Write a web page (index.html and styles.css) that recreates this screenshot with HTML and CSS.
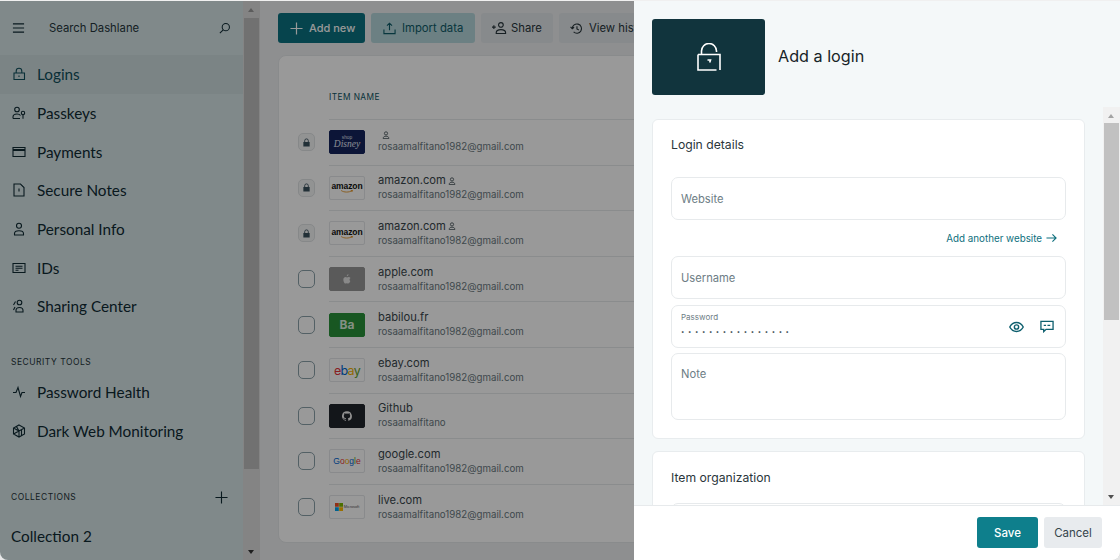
FILE: index.html
```html
<!DOCTYPE html>
<html lang="en">
<head>
<meta charset="utf-8">
<title>Dashlane - Add a login</title>
<link rel="stylesheet" href="styles.css">
</head>
<body>
<div class="app">
  <aside class="sidebar">
    <div class="search">
      <svg class="ico-menu" viewBox="0 0 14 12"><path d="M1 1.5h12M1 6h12M1 10.5h12"/></svg>
      <span class="search-text">Search Dashlane</span>
      <svg class="ico-search" viewBox="0 0 14 14"><circle cx="8.4" cy="5.6" r="3.9"/><path d="M5.6 8.4L2 12"/></svg>
    </div>
    <nav class="nav">
      <a class="nav-item active"><svg viewBox="0 0 14 14"><path d="M2 6h10.500v6.500H2zM4.200 6V4a2.800 2.800 0 0 1 5.600 0v2M7 8.500v1.500"/></svg><span>Logins</span></a>
      <a class="nav-item"><svg viewBox="0 0 14 14"><circle cx="5" cy="3.500" r="2.300"/><path d="M1 12.500v-1.500c0-2 1.600-3 4-3s3 .7 3.500 1.500M1 12.500h7"/><circle cx="11" cy="7" r="1.700"/><path d="M11 8.700v4"/></svg><span>Passkeys</span></a>
      <a class="nav-item"><svg viewBox="0 0 14 14"><path d="M1 2.500h12v9H1zM1 4.500h12M1 5.500h12"/></svg><span>Payments</span></a>
      <a class="nav-item"><svg viewBox="0 0 14 14"><path d="M2 1h6.500L12 4.500V13H2zM7 5.500v3"/></svg><span>Secure Notes</span></a>
      <a class="nav-item"><svg viewBox="0 0 14 14"><circle cx="7" cy="3.700" r="2.500"/><path d="M2.500 13v-1.500c0-1.700 1.500-2.800 4.500-2.800s4.500 1.100 4.500 2.800V13z"/></svg><span>Personal Info</span></a>
      <a class="nav-item"><svg viewBox="0 0 14 14"><path d="M1 2.500h12v9H1zM3.500 5.200h7M3.500 7.200h7M3.500 9.200h3"/></svg><span>IDs</span></a>
      <a class="nav-item"><svg viewBox="0 0 14 14"><circle cx="7.500" cy="3.500" r="2.300"/><path d="M4 13v-1.500C4 9.700 5.500 8.500 7.500 8.500s3.500 1.200 3.500 3V13zM3.500 2.500L1.500 6M3 8L1.500 11"/></svg><span>Sharing Center</span></a>
    </nav>
    <h2 class="side-label tools-label">SECURITY TOOLS</h2>
    <nav class="nav">
      <a class="nav-item"><svg viewBox="0 0 14 14"><path d="M1 7.500h3l2-5 2.500 9 1.500-4h3"/></svg><span>Password Health</span></a>
      <a class="nav-item"><svg viewBox="0 0 14 14"><path d="M7 1l5.500 3v6L7 13l-5.500-3V4zM4.500 2.500L7 7l5.500-3M7 7l-5.500 3M7 7v6M9.500 11.500V5.500M1.500 4l5.500 3"/></svg><span>Dark Web Monitoring</span></a>
    </nav>
    <div class="coll-head">
      <h2 class="side-label">COLLECTIONS</h2>
      <svg class="ico-plus" viewBox="0 0 14 14"><path d="M7 .5v13M.5 7h13"/></svg>
    </div>
    <div class="coll-item">Collection 2</div>
  </aside>
  <div class="side-scroll">
    <span class="arrow up"></span>
    <span class="side-thumb"></span>
    <span class="arrow down"></span>
  </div>

  <main class="main">
    <div class="toolbar">
      <button class="btn btn-add"><svg viewBox="0 0 14 14"><path d="M7 .5v13M.5 7h13"/></svg>Add new</button>
      <button class="btn btn-import"><svg viewBox="0 0 14 14"><path d="M1 8v4.500h12V8M7 9V1.500M4.300 4L7 1.300 9.700 4"/></svg>Import data</button>
      <button class="btn btn-plain"><svg viewBox="0 0 16 14"><circle cx="9.500" cy="3.700" r="2.500"/><path d="M4.500 12.800v-.8c0-2 2-3.300 5-3.300s5 1.300 5 3.300v.8zM0 6h4M2 4v4"/></svg>Share</button>
      <button class="btn btn-plain"><svg class="ico-hist" viewBox="0 0 14 14"><path d="M2.400 7a5 5 0 1 1 1.500 3.700M.6 5.300L2.400 7.300l2-1.600M7.500 4.500V7.500l2 1"/></svg>View history</button>
    </div>
    <section class="card-list">
      <div class="list-head">ITEM NAME</div>
      <ul class="rows">
        <li class="row"><span class="lockbox"><svg viewBox="0 0 10 10"><path class="lock-shackle" d="M3 5V3a2 2 0 0 1 4 0v2"/><path class="lock-body" d="M1.500 4.500h7v5h-7z"/></svg></span><span class="logo logo-disney"><small>shop</small><em>Disney</em></span><div class="row-text"><div class="row-title"><svg class="shared" viewBox="0 0 10 10"><circle cx="5" cy="3" r="2"/><path d="M1.500 9.500c0-2 1-3 3.500-3s3.500 1 3.500 3z"/></svg></div><div class="row-sub">rosaamalfitano1982@gmail.com</div></div></li>
        <li class="row"><span class="lockbox"><svg viewBox="0 0 10 10"><path class="lock-shackle" d="M3 5V3a2 2 0 0 1 4 0v2"/><path class="lock-body" d="M1.500 4.500h7v5h-7z"/></svg></span><span class="logo logo-amazon">amazon<svg viewBox="0 0 24 5"><path d="M2 .8c5 3.500 13 3.500 19 .2M18.500.6l3 .2-1.200 2.400"/></svg></span><div class="row-text"><div class="row-title">amazon.com<svg class="shared" viewBox="0 0 10 10"><circle cx="5" cy="3" r="2"/><path d="M1.500 9.500c0-2 1-3 3.500-3s3.500 1 3.500 3z"/></svg></div><div class="row-sub">rosaamalfitano1982@gmail.com</div></div></li>
        <li class="row"><span class="lockbox"><svg viewBox="0 0 10 10"><path class="lock-shackle" d="M3 5V3a2 2 0 0 1 4 0v2"/><path class="lock-body" d="M1.500 4.500h7v5h-7z"/></svg></span><span class="logo logo-amazon">amazon<svg viewBox="0 0 24 5"><path d="M2 .8c5 3.500 13 3.500 19 .2M18.500.6l3 .2-1.200 2.400"/></svg></span><div class="row-text"><div class="row-title">amazon.com<svg class="shared" viewBox="0 0 10 10"><circle cx="5" cy="3" r="2"/><path d="M1.500 9.500c0-2 1-3 3.500-3s3.500 1 3.500 3z"/></svg></div><div class="row-sub">rosaamalfitano1982@gmail.com</div></div></li>
        <li class="row"><span class="check"></span><span class="logo logo-apple"><svg viewBox="0 0 12 14"><path d="M8.300 0c.1 1.500-1.200 2.900-2.600 2.800C5.600 1.400 6.900.1 8.300 0zM11 10c-.7 1.900-1.900 3.800-3.200 3.800-.9 0-1.200-.6-2.200-.6s-1.400.6-2.200.6C2 13.800.5 10.700.5 8.200.5 5.500 2.200 4 3.800 4c1 0 1.800.7 2.300.7S7.400 4 8.600 4c.9 0 2 .5 2.700 1.500-2.100 1.300-1.800 3.800-.3 4.500z"/></svg></span><div class="row-text"><div class="row-title">apple.com</div><div class="row-sub">rosaamalfitano1982@gmail.com</div></div></li>
        <li class="row"><span class="check"></span><span class="logo logo-ba">Ba</span><div class="row-text"><div class="row-title">babilou.fr</div><div class="row-sub">rosaamalfitano1982@gmail.com</div></div></li>
        <li class="row"><span class="check"></span><span class="logo logo-ebay"><b class="c-red">e</b><b class="c-blue">b</b><b class="c-yel">a</b><b class="c-grn">y</b></span><div class="row-text"><div class="row-title">ebay.com</div><div class="row-sub">rosaamalfitano1982@gmail.com</div></div></li>
        <li class="row"><span class="check"></span><span class="logo logo-github"><svg viewBox="0 0 16 16"><path d="M8 .2a8 8 0 0 0-2.500 15.600c.4.100.5-.200.500-.400v-1.400c-2.200.500-2.700-1-2.700-1-.400-.900-.900-1.200-.900-1.200-.700-.500.100-.500.100-.500.800.100 1.200.800 1.200.800.700 1.200 1.900.900 2.300.700.100-.500.300-.900.500-1.100-1.800-.200-3.600-.900-3.600-4 0-.900.300-1.600.800-2.100-.100-.200-.400-1 .100-2.100 0 0 .700-.200 2.200.800a7.500 7.500 0 0 1 4 0c1.500-1 2.200-.800 2.200-.800.400 1.100.200 1.900.100 2.100.500.600.800 1.300.800 2.100 0 3.100-1.900 3.700-3.700 3.900.300.300.600.700.600 1.500v2.200c0 .200.100.500.600.400A8 8 0 0 0 8 .2z"/></svg></span><div class="row-text"><div class="row-title">Github</div><div class="row-sub">rosaamalfitano</div></div></li>
        <li class="row"><span class="check"></span><span class="logo logo-google"><b class="c-blue">G</b><b class="c-red">o</b><b class="c-yel">o</b><b class="c-blue">g</b><b class="c-grn">l</b><b class="c-red">e</b></span><div class="row-text"><div class="row-title">google.com</div><div class="row-sub">rosaamalfitano1982@gmail.com</div></div></li>
        <li class="row"><span class="check"></span><span class="logo logo-ms"><svg viewBox="0 0 8 8"><path class="ms-r" d="M0 0h3.800v3.800H0z"/><path class="ms-g" d="M4.200 0H8v3.800H4.200z"/><path class="ms-b" d="M0 4.200h3.800V8H0z"/><path class="ms-y" d="M4.200 4.200H8V8H4.200z"/></svg>Microsoft</span><div class="row-text"><div class="row-title">live.com</div><div class="row-sub">rosaamalfitano1982@gmail.com</div></div></li>
      </ul>
    </section>
  </main>

  <div class="dim"></div>

  <aside class="panel">
    <header class="panel-head">
      <div class="tile"><svg viewBox="0 0 24 28"><path d="M1 11.500h22v15.500M19.500 27H1V11.500M4.500 11.500V8a7.500 7.500 0 0 1 15 0v1M10.500 17h3l-.8 2.500"/></svg></div>
      <h1>Add a login</h1>
    </header>
    <div class="panel-body">
      <div class="panel-content">
        <section class="form-card">
          <h2>Login details</h2>
          <div class="field">Website</div>
          <a class="add-site">Add another website<svg viewBox="0 0 12 10"><path d="M.5 5h10.500M7 1l4 4-4 4"/></svg></a>
          <div class="field">Username</div>
          <div class="field field-pass">
            <div class="pass-text"><label>Password</label><span class="dots">••••••••••••••••</span></div>
            <svg class="ico-eye" viewBox="0 0 16 12"><path d="M.8 6C2.500 2.800 5 1.200 8 1.200S13.500 2.800 15.200 6c-1.700 3.200-4.200 4.800-7.200 4.800S2.500 9.200.8 6z"/><circle cx="8" cy="6" r="2.300"/></svg>
            <svg class="ico-gen" viewBox="0 0 15 13"><path d="M1 1h13v8.500H6.500L4 12V9.500H1zM4 5.300h2.500M8 5.300h3"/></svg>
          </div>
          <div class="field field-note">Note</div>
        </section>
        <section class="form-card second">
          <h2>Item organization</h2>
          <div class="field"></div>
        </section>
      </div>
      <div class="panel-scroll">
        <span class="arrow up light"></span>
        <span class="panel-thumb"></span>
        <span class="arrow down dark"></span>
      </div>
    </div>
    <footer class="panel-foot">
      <button class="btn-save">Save</button>
      <button class="btn-cancel">Cancel</button>
    </footer>
  </aside>
</div>
</body>
</html>
```

FILE: styles.css
```css
* { box-sizing: border-box; }
html, body { margin: 0; padding: 0; height: 100%; overflow: hidden; }
body { background: #e8e8e8; font-family: "Inter", "Liberation Sans", sans-serif; color: #1c2a30; }
ul { list-style: none; margin: 0; padding: 0; }
h1, h2 { margin: 0; font-weight: 400; }
button { font-family: inherit; border: 0; padding: 0; }
svg { fill: none; stroke: currentColor; display: block; }

.app { position: relative; display: flex; width: 1120px; height: 560px; overflow: hidden; border-radius: 0 0 8px 8px; background: #edeef0; border-top: 1px solid #f0f0f0; }

/* Sidebar */
.sidebar { width: 243px; flex: none; height: 559px; background: #d6e5e7; color: #0f2a33; font-family: "Lato", "Inter", sans-serif; display: flex; flex-direction: column; overflow: hidden; }
.search { height: 54px; flex: none; display: flex; align-items: center; padding: 0 12px; }
.ico-menu { width: 13px; height: 12px; stroke-width: 1.2; }
.search-text { margin-left: 24px; font-family: "Inter", sans-serif; font-size: 11.3px; color: #25353b; flex: 1; }
.ico-search { width: 13px; height: 13px; stroke-width: 1.1; }
.nav { display: flex; flex-direction: column; }
.nav-item { height: 38.7px; display: flex; align-items: center; padding-left: 12px; font-size: 15.3px; }
.nav-item svg { width: 14px; height: 14px; stroke-width: 1.1; margin-right: 11px; flex: none; }
.nav-item.active { background: #cedcde; color: #0f4f5c; }
.side-label { font-size: 8.5px; letter-spacing: .5px; padding-left: 11px; color: #243238; font-family: "Inter", sans-serif; }
.tools-label { margin-top: 29px; margin-bottom: 4px; line-height: 14px; }
.coll-head { display: flex; justify-content: space-between; align-items: center; margin-top: 40px; padding-right: 15px; height: 14px; }
.ico-plus { width: 13px; height: 13px; stroke-width: 1.2; }
.coll-item { margin-top: 22px; padding-left: 11px; font-size: 15.3px; line-height: 20px; }

.side-scroll { width: 17px; flex: none; height: 559px; background: #dcdcdc; display: flex; flex-direction: column; align-items: center; position: relative; padding-top: 17px; }
.side-thumb { width: 15px; height: 451px; background: #bcbcbc; }
.arrow { position: absolute; left: 5px; width: 0; height: 0; border-left: 3.5px solid transparent; border-right: 3.5px solid transparent; }
.arrow.up { top: 7px; border-bottom: 4px solid #9a9a9a; }
.arrow.down { bottom: 6px; border-top: 4px solid #333; }
.arrow.up.light { border-bottom-color: #a3a3a3; }
.arrow.down.dark { border-top-color: #505050; }

/* Main list */
.main { flex: 1; padding: 12px 0 0 18px; min-width: 0; overflow: hidden; }
.toolbar { display: flex; gap: 6px; white-space: nowrap; }
.btn { height: 30px; border-radius: 3px; display: flex; align-items: center; font-size: 11.3px; flex: none; }
.btn svg { flex: none; }
.btn-add { width: 87px; background: #0b7280; color: #fff; padding-left: 12px; font-weight: 500; font-size: 11px; }
.btn-add svg { width: 13px; height: 13px; margin-right: 6px; stroke-width: 1.3; }
.btn-import { width: 104px; background: #b4d6da; color: #0e5b68; padding-left: 12px; }
.btn-import svg { width: 13px; height: 13px; margin-right: 6px; stroke-width: 1.2; }
.btn-plain { background: #e2e6e9; color: #27353b; padding: 0 11px; }
.btn-plain svg { width: 15px; height: 14px; margin-right: 4px; stroke-width: 1.2; }
.btn-plain .ico-hist { width: 13px; height: 13px; margin-right: 6px; }
.card-list { margin-top: 12px; width: 420px; height: 488px; background: #fff; border: 1px solid #e5e8ea; border-radius: 8px; padding: 0 0 0 19px; }
.list-head { height: 63px; padding-left: 31px; display: flex; align-items: center; font-size: 8.3px; letter-spacing: .45px; color: #0e5563; padding-top: 18px; }
.rows { margin-left: 31px; }
.row { height: 45.6px; border-top: 1px solid #e7eaec; display: flex; align-items: center; position: relative; }
.check, .lockbox { position: absolute; left: -31px; top: 50%; margin-top: -9px; width: 17px; height: 18px; border: 1px solid #8aa0a8; border-radius: 5px; background: #fff; }
.lockbox { border-color: #e0e3e5; display: flex; align-items: center; justify-content: center; background: #f4f5f6; }
.lockbox svg { width: 9px; height: 9px; stroke: #39505c; }
.lock-shackle { stroke-width: 1; }
.lock-body { fill: #39505c; stroke: none; }
.logo { width: 36px; height: 24px; flex: none; border-radius: 2px; display: flex; align-items: center; justify-content: center; border: 1px solid #e4e7e9; background: #fff; overflow: hidden; }
.logo-disney { background: #14235c; border-color: #14235c; color: #e2e8f5; flex-direction: column; line-height: .9; }
.logo-disney small { font-size: 4.5px; }
.logo-disney em { font-size: 9.5px; font-family: "Liberation Serif", serif; }
.logo-amazon { flex-direction: column; font-size: 8.5px; font-weight: 700; color: #111; line-height: 8px; letter-spacing: -.1px; font-family: "Liberation Sans", sans-serif; }
.logo-amazon svg { width: 14px; height: 3px; stroke: #e08a12; stroke-width: 1.4; }
.logo-apple { background: #969696; border-color: #969696; }
.logo-apple svg { width: 8px; height: 10px; fill: #e4e4e4; stroke: none; }
.logo-ba { background: #28923a; border-color: #28923a; color: #dcefdc; font-size: 12px; font-weight: 700; }
.logo-ebay { font-size: 12.5px; letter-spacing: -.7px; }
.logo-ebay b, .logo-google b { font-weight: 400; }
.logo-google { font-size: 8.5px; font-family: "Liberation Sans", sans-serif; }
.c-red { color: #e53238; }
.c-blue { color: #0064d2; }
.c-yel { color: #f5af02; }
.c-grn { color: #66a32a; }
.logo-github { background: #20252c; border-color: #20252c; }
.logo-github svg { width: 10px; height: 10px; fill: #f2f2f2; stroke: none; }
.logo-ms { font-size: 3.8px; color: #555; gap: 1px; font-family: "Liberation Sans", sans-serif; }
.logo-ms svg { width: 8px; height: 8px; stroke: none; flex: none; }
.ms-r { fill: #f25022; } .ms-g { fill: #7fba00; } .ms-b { fill: #00a4ef; } .ms-y { fill: #ffb900; }
.row-text { margin-left: 13px; white-space: nowrap; }
.row-title { font-size: 11.2px; line-height: 15px; color: #39464c; display: flex; align-items: center; min-height: 15px; }
.row-sub { font-size: 9.7px; line-height: 14px; color: #6a7980; }
.shared { width: 8px; height: 8px; stroke-width: 1; margin-left: 2px; color: #39464c; }
.row:first-child .shared { margin-left: 4px; }
.row:first-child .row-title { min-height: 9px; line-height: 9px; }

/* Overlay */
.dim { position: absolute; inset: 0; background: rgba(0, 0, 0, .4); }

/* Panel */
.panel { position: absolute; top: 0; left: 634px; width: 486px; height: 559px; background: #f4f8f9; display: flex; flex-direction: column; }
.panel-head { height: 106px; flex: none; display: flex; align-items: flex-start; padding: 18px 0 0 18px; }
.tile { width: 113px; height: 76px; background: #11343d; border-radius: 3px; display: flex; align-items: center; justify-content: center; color: #fff; }
.tile svg { width: 24px; height: 28px; stroke-width: 1.6; }
.panel-head h1 { margin: 0 0 0 13px; font-size: 16.2px; line-height: 75px; color: #172327; }
.panel-body { flex: 1; min-height: 0; display: flex; }
.panel-content { flex: 1; padding: 12px 18px 0; overflow: hidden; min-width: 0; }
.form-card { background: #fff; border: 1px solid #e8ecee; border-radius: 6px; padding: 0 18px; height: 320px; }
.form-card.second { margin-top: 12px; height: 200px; }
.form-card h2 { font-size: 12.2px; line-height: 16px; padding-top: 17px; height: 57px; color: #2a363b; }
.form-card.second h2 { height: 51px; padding-top: 18px; }
.field { height: 43px; border: 1px solid #e7eaec; border-radius: 7px; padding: 0 9px; display: flex; align-items: center; font-size: 11.2px; color: #6d7d85; background: #fff; }
.add-site { height: 36px; display: flex; align-items: center; justify-content: flex-end; padding-right: 9px; font-size: 9.8px; color: #0e6f7d; }
.add-site svg { width: 11px; height: 10px; margin-left: 4px; stroke-width: 1.2; }
.field-pass { margin-top: 6px; align-items: center; }
.pass-text { flex: 1; display: flex; flex-direction: column; margin-top: -3px; }
.pass-text label { font-size: 8px; line-height: 10px; color: #6d7d85; }
.dots { font-size: 6px; line-height: 12px; letter-spacing: 3.6px; color: #33434a; margin-top: 4px; }
.ico-eye { width: 15px; height: 12px; color: #0e5f6e; stroke-width: 1.5; margin-right: 16px; }
.ico-gen { width: 14px; height: 13px; color: #0e5f6e; stroke-width: 1.4; margin-right: 2px; }
.field-note { margin-top: 5px; height: 67px; align-items: flex-start; padding-top: 13px; }
.panel-scroll { width: 17px; flex: none; background: #f1f1f1; position: relative; padding: 16px 1px 0; }
.panel-thumb { display: block; width: 15px; height: 197px; background: #c1c1c1; }
.panel-foot { height: 55px; flex: none; background: #fff; border-top: 1px solid #e7eaec; display: flex; justify-content: flex-end; align-items: center; gap: 6px; padding: 0 18px 1px 0; }
.btn-save { width: 61px; height: 31px; background: #0e7f8c; color: #fff; border-radius: 3px; font-size: 11.5px; font-weight: 500; }
.btn-cancel { width: 58px; height: 31px; background: #e8ebee; color: #36454c; border-radius: 3px; font-size: 11.5px; }
```
